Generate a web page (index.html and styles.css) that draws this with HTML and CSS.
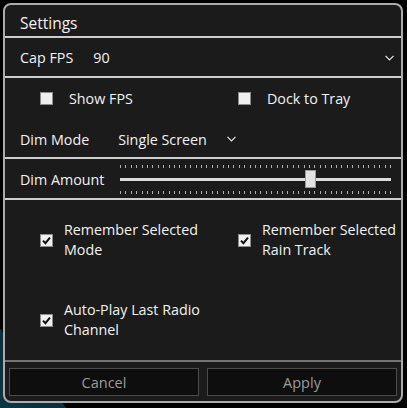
FILE: index.html
```html
<!DOCTYPE html>
<html>
<head>
<meta charset="utf-8">
<link rel="stylesheet" href="styles.css">
</head>
<body>
<div class="window">
  <div class="title">Settings</div>
  <div class="sep"></div>
  <div class="row">
    <span class="label">Cap FPS</span>
    <span class="value cap">90</span>
    <span class="grow"></span>
    <svg class="chev" width="9" height="6" viewBox="0 0 9 6"><path d="M0.5 0.8 L4.5 4.8 L8.5 0.8" fill="none" stroke="#e8e8e8" stroke-width="1.2"/></svg>
  </div>
  <div class="sep"></div>
  <div class="checks">
    <label class="chk"><span class="box"></span><span>Show FPS</span></label>
    <label class="chk"><span class="box"></span><span>Dock to Tray</span></label>
  </div>
  <div class="row dim">
    <span class="label">Dim Mode</span>
    <span class="value mode">Single Screen</span>
    <svg class="chev2" width="9" height="6" viewBox="0 0 9 6"><path d="M0.5 0.8 L4.5 4.8 L8.5 0.8" fill="none" stroke="#e8e8e8" stroke-width="1.2"/></svg>
  </div>
  <div class="sep"></div>
  <div class="row amount">
    <span class="label wide">Dim Amount</span>
    <div class="slider">
      <div class="ticks"></div>
      <div class="track"></div>
      <div class="ticks"></div>
      <div class="thumb" style="left:70%"></div>
    </div>
  </div>
  <div class="sep"></div>
  <div class="options">
    <div class="opt"><span class="box on"><svg width="11" height="11" viewBox="0 0 11 11"><path d="M2 5.6 L4.4 8.2 L9 2.6" fill="none" stroke="#111" stroke-width="2"/></svg></span><span class="otext">Remember Selected<br>Mode</span></div>
    <div class="opt"><span class="box on"><svg width="11" height="11" viewBox="0 0 11 11"><path d="M2 5.6 L4.4 8.2 L9 2.6" fill="none" stroke="#111" stroke-width="2"/></svg></span><span class="otext">Remember Selected<br>Rain Track</span></div>
    <div class="opt"><span class="box on"><svg width="11" height="11" viewBox="0 0 11 11"><path d="M2 5.6 L4.4 8.2 L9 2.6" fill="none" stroke="#111" stroke-width="2"/></svg></span><span class="otext">Auto-Play Last Radio<br>Channel</span></div>
    <div class="opt"></div>
  </div>
  <div class="sep foot"></div>
  <div class="footer">
    <button class="btn">Cancel</button>
    <button class="btn">Apply</button>
  </div>
</div>
</body>
</html>
```
FILE: styles.css
```css
* { box-sizing: border-box; }
html, body { margin: 0; padding: 0; }
body {
  width: 407px;
  height: 408px;
  padding: 3px 0 0 3px;
  background: linear-gradient(50deg, #0c3546 0, #0a2e3d 51px, #000 51px);
  font-family: "Open Sans", "Noto Sans", sans-serif;
  font-size: 14.3px;
  color: #f2f2f2;
  overflow: hidden;
}
.window {
  width: 400px;
  height: 400px;
  border: 2px solid #ababab;
  border-radius: 8px;
  background: #1b1b1b;
  display: flex;
  flex-direction: column;
  overflow: hidden;
}
.title {
  height: 31px;
  padding-left: 15px;
  display: flex;
  align-items: center;
  font-size: 15.5px;
  padding-top: 4px;
}
.sep { height: 2px; background: #cdcdcd; flex: none; }
.sep.foot { background: #747474; }
.row {
  display: flex;
  align-items: center;
  padding-left: 15px;
  height: 38px;
  padding-top: 1px;
  white-space: nowrap;
}
.value.cap { margin-left: 20px; }
.grow { flex: 1; }
.chev { margin-right: 7px; }
.checks {
  display: flex;
  height: 40px;
  align-items: center;
  padding-left: 35px;
}
.chk {
  display: flex;
  align-items: center;
  width: 198px;
  flex: none;
  white-space: nowrap;
}
.chk .box { margin-right: 16px; }
.box {
  width: 13px;
  height: 13px;
  background: #f0f0f0;
  border: 1px solid #8d8d8d;
  flex: none;
  display: flex;
  align-items: center;
  justify-content: center;
}
.row.dim { height: 39px; padding-top: 3px; }
.value.mode { margin-left: 29px; }
.chev2 { margin-left: 20px; }
.row.amount { height: 39px; padding-top: 1px; }
.label.wide { width: 100px; flex: none; }
.slider {
  position: relative;
  width: 271px;
  flex: none;
  display: flex;
  flex-direction: column;
}
.ticks {
  height: 3px;
  background: repeating-linear-gradient(90deg, #b0b0b0 0 1px, transparent 1px 5.4px);
}
.track {
  height: 3px;
  margin: 10px 0 10px 0;
  background: #dcdcdc;
}
.thumb {
  position: absolute;
  top: 5px;
  width: 11px;
  height: 18px;
  margin-left: -5px;
  background: #e2e2e2;
  border: 1px solid #9a9a9a;
}
.options {
  height: 160px;
  display: grid;
  grid-template-columns: 198px 198px;
  grid-template-rows: 80px 80px;
  padding-left: 35px;
}
.opt {
  display: flex;
  align-items: center;
}
.opt .box { margin-right: 11px; }
.otext { line-height: 20px; white-space: nowrap; }
.footer {
  flex: 1;
  display: flex;
  gap: 8px;
  padding: 6px 4px 5px 4px;
}
.btn {
  flex: 1;
  background: #0e0e0e;
  border: 1px solid #4c4c4c;
  color: #9c9c9c;
  font-family: "Open Sans", "Noto Sans", sans-serif;
  font-size: 14.5px;
  padding: 0;
}
```
